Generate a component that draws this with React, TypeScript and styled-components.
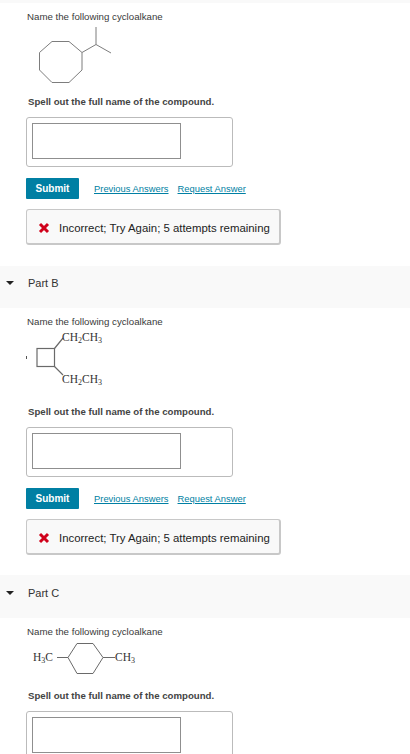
import styled, { createGlobalStyle } from 'styled-components';

const GlobalStyle = createGlobalStyle`
  html, body {
    margin: 0;
    padding: 0;
    height: 754px;
    overflow: hidden;
    background: #fff;
    font-family: 'Liberation Sans', Arial, sans-serif;
  }
`;

function Octagon() {
  return (
    <Figure width="100" height="57" viewBox="0 0 100 57">
      <g fill="none" stroke="#7d7d7d" strokeWidth="1">
        <path d="M26 14.5 L43 14.5 L56 25.5 L56 43 L43 55.5 L26 55.5 L13.5 43 L13.5 25.5 Z" />
        <path d="M56 25.5 L70 17.5 L85 26 M70 17.5 L70 0" />
      </g>
    </Figure>
  );
}

function Cyclobutane() {
  return (
    <Figure width="120" height="60" viewBox="0 0 120 60">
      <path d="M0.5 26 V29" stroke="#555" fill="none" />
      <g fill="none" stroke="#6a6a6a" strokeWidth="1.2">
        <rect x="11" y="18.5" height="18" width="17.5" />
        <path d="M28.5 18.5 L37 8 M28.5 36.5 L37 45" />
      </g>
      <ChemText x="36" y="11">CH<Sub dy="2">2</Sub><tspan dy="-2">CH</tspan><Sub dy="2">3</Sub></ChemText>
      <ChemText x="36" y="53">CH<Sub dy="2">2</Sub><tspan dy="-2">CH</tspan><Sub dy="2">3</Sub></ChemText>
    </Figure>
  );
}

function Cyclohexane() {
  return (
    <Figure width="130" height="31" viewBox="0 0 130 31">
      <g fill="none" stroke="#6a6a6a" strokeWidth="1">
        <path d="M42 14.5 L51 0.5 L67 0.5 L77 14.5 L67 30.5 L51 30.5 Z" />
        <path d="M31 14.5 H42 M77 14.5 H89" />
      </g>
      <ChemText x="7" y="18">H<Sub dy="2">3</Sub><tspan dy="-2">C</tspan></ChemText>
      <ChemText x="89" y="18">CH<Sub dy="2">3</Sub></ChemText>
    </Figure>
  );
}

function Answer() {
  return (
    <AnswerBox>
      <AnswerInput type="text" />
    </AnswerBox>
  );
}

function Actions() {
  return (
    <>
      <ActionRow>
        <SubmitButton>Submit</SubmitButton>
        <TextLink href="#">Previous Answers</TextLink>
        <TextLink href="#">Request Answer</TextLink>
      </ActionRow>
      <Feedback>
        <svg width="12" height="12" viewBox="0 0 12 12">
          <path d="M2 2 L10 10 M10 2 L2 10" stroke="#d0021b" strokeWidth="3" />
        </svg>
        <FeedbackText>Incorrect; Try Again; 5 attempts remaining</FeedbackText>
      </Feedback>
    </>
  );
}

function PartHeader({ label, height }: { label: string; height: number }) {
  return (
    <PartBand $height={height}>
      <Caret />
      <PartLabel>{label}</PartLabel>
    </PartBand>
  );
}

export default function App() {
  return (
    <Page>
      <GlobalStyle />
      <TopStrip />
      <PartA>
        <Prompt>Name the following cycloalkane</Prompt>
        <FigureSlot $top={4} $bottom={12}>
          <Octagon />
        </FigureSlot>
        <Instruction>Spell out the full name of the compound.</Instruction>
        <Answer />
        <Actions />
      </PartA>
      <PartHeader label="Part B" height={42} />
      <PartBody>
        <Prompt>Name the following cycloalkane</Prompt>
        <FigureSlot $top={2} $bottom={16}>
          <Cyclobutane />
        </FigureSlot>
        <Instruction>Spell out the full name of the compound.</Instruction>
        <Answer />
        <Actions />
      </PartBody>
      <PartHeader label="Part C" height={43} />
      <PartBody>
        <Prompt>Name the following cycloalkane</Prompt>
        <FigureSlot $top={5} $bottom={16}>
          <Cyclohexane />
        </FigureSlot>
        <Instruction>Spell out the full name of the compound.</Instruction>
        <Answer />
      </PartBody>
    </Page>
  );
}

const Page = styled.div`
  width: 410px;
  height: 754px;
  overflow: hidden;
  color: #333;
`;

const TopStrip = styled.div`
  height: 3px;
  background: #f9f9f9;
`;

const PartA = styled.section`
  padding: 8px 0 21px 26px;
`;

const PartBody = styled.section`
  padding: 8px 0 20px 26px;
`;

const Prompt = styled.div`
  height: 12px;
  line-height: 12px;
  padding-left: 1px;
  font-size: 9.7px;
  color: #3a3a3a;
`;

const FigureSlot = styled.div<{ $top: number; $bottom: number }>`
  margin: ${(p) => p.$top}px 0 ${(p) => p.$bottom}px;
  line-height: 0;
`;

const Figure = styled.svg`
  display: block;
  overflow: visible;
`;

const ChemText = styled.text`
  font-family: 'Liberation Serif', 'Times New Roman', serif;
  font-size: 11.5px;
  fill: #333;
`;

const Sub = styled.tspan`
  font-size: 8px;
`;

const Instruction = styled.div`
  height: 12px;
  line-height: 12px;
  padding-left: 2px;
  font-size: 9.65px;
  font-weight: 700;
  color: #444;
`;

const AnswerBox = styled.div`
  box-sizing: border-box;
  width: 207px;
  height: 50px;
  margin-top: 9px;
  padding: 5px 0 0 5px;
  border: 1px solid #bbb;
  border-radius: 3px;
`;

const AnswerInput = styled.input`
  display: block;
  box-sizing: border-box;
  width: 149px;
  height: 36px;
  margin: 0;
  padding: 0;
  border: 1px solid #767676;
  outline: 1px solid #8f8f8f;
  outline-offset: -1px;
  background: #fff;
`;

const ActionRow = styled.div`
  display: flex;
  align-items: center;
  height: 21px;
  margin-top: 11px;
`;

const SubmitButton = styled.button`
  width: 53px;
  height: 21px;
  margin-right: 15px;
  padding: 0;
  border: 0;
  border-radius: 1px;
  background: #007fa3;
  color: #fff;
  font-family: inherit;
  font-size: 10px;
  font-weight: 700;
`;

const TextLink = styled.a`
  margin-right: 9px;
  color: #007fa3;
  font-size: 9.4px;
  font-weight: 400;
  text-decoration: underline;
`;

const Feedback = styled.div`
  box-sizing: border-box;
  display: flex;
  align-items: center;
  gap: 9px;
  width: 255px;
  height: 36px;
  margin-top: 10px;
  padding: 2px 0 0 11px;
  border: 1px solid #c8c8c8;
  border-bottom-width: 2px;
  border-right-width: 2px;
  border-radius: 3px;
  background: #f9f9f9;
`;

const FeedbackText = styled.span`
  font-size: 11.4px;
  color: #222;
  white-space: nowrap;
`;

const PartBand = styled.div<{ $height: number }>`
  display: flex;
  align-items: center;
  box-sizing: border-box;
  height: ${(p) => p.$height}px;
  padding-bottom: 8px;
  background: #f9f9f9;
`;

const Caret = styled.span`
  width: 0;
  height: 0;
  margin-left: 6px;
  border-left: 4px solid transparent;
  border-right: 4px solid transparent;
  border-top: 4px solid #222;
`;

const PartLabel = styled.span`
  margin-left: 14px;
  font-size: 11px;
  color: #333;
`;
